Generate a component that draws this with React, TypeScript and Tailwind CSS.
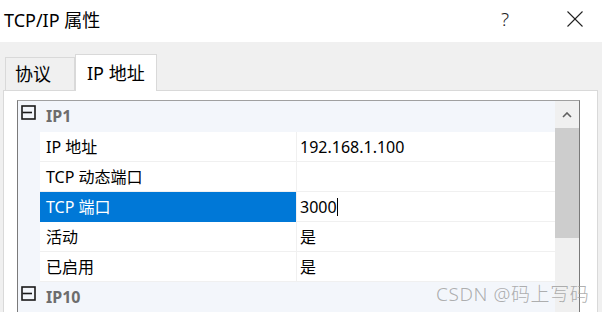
import React from "react";

const FONT = { fontFamily: '"Noto Sans", "Noto Sans CJK SC", sans-serif' };

function MinusBox() {
  return (
    <svg width="15" height="15" viewBox="0 0 15 15" className="block">
      <rect x="1" y="1" width="13" height="13" fill="none" stroke="#1a1a1a" strokeWidth="1.6" />
      <line x1="1.5" y1="7.5" x2="11" y2="7.5" stroke="#1a1a1a" strokeWidth="1.6" />
    </svg>
  );
}

function Category({ label }: { label: string }) {
  return (
    <div className="flex h-[31px] bg-[#f3f6fb] border-b border-[#f3f6fb]">
      <div className="w-[22px] shrink-0 pl-[3px] pt-[4px]">
        <MinusBox />
      </div>
      <div className="flex-1 pl-[6px] flex items-center text-[16px] font-bold text-[#6d6d6d]">{label}</div>
    </div>
  );
}

function Row({ name, value, selected, caret }: { name: string; value: string; selected?: boolean; caret?: boolean }) {
  return (
    <div className="flex h-[30px]">
      <div className="w-[22px] shrink-0 bg-[#f3f6fb]" />
      <div
        className={
          "w-[256px] shrink-0 pl-[6px] flex items-center text-[16px] border-b " +
          (selected ? "bg-[#0078d7] text-white border-[#0078d7]" : "bg-white text-black border-[#f0f0f0]")
        }
      >
        {name}
      </div>
      <div className="flex-1 bg-white border-l border-b border-[#f0f0f0] pl-[3px] flex items-center text-[16px] text-black">
        <span>{value}</span>
        {caret && <span className="inline-block w-px h-[18px] bg-black" />}
      </div>
    </div>
  );
}

export default function App() {
  return (
    <div className="w-[602px] h-[312px] overflow-hidden bg-[#f0f0f0] relative" style={FONT}>
      {/* title bar */}
      <div className="h-[42px] bg-white flex items-center">
        <div className="pl-[4px] text-[18px] text-black flex-1 -mt-[2px]">TCP/IP 属性</div>
        <div className="text-[19px] text-[#222] font-light w-[12px] mr-[54px] -mt-[4px]">?</div>
        <svg width="16" height="16" viewBox="0 0 16 16" className="mr-[19px] -mt-[4px]">
          <line x1="0.5" y1="0.5" x2="15.5" y2="15.5" stroke="#222" strokeWidth="1.1" />
          <line x1="15.5" y1="0.5" x2="0.5" y2="15.5" stroke="#222" strokeWidth="1.1" />
        </svg>
      </div>

      {/* tabs */}
      <div className="h-[48px] flex items-end pl-[5px]">
        <div className="h-[33px] w-[70px] border border-b-0 border-[#d9d9d9] bg-[#f0f0f0] flex items-center pl-[9px] text-[18px] text-black">
          协议
        </div>
        <div className="relative z-10 -mb-px h-[37px] w-[82px] border border-b-0 border-[#d9d9d9] bg-white flex items-center pl-[11px] text-[18px] text-black">
          IP 地址
        </div>
      </div>

      {/* panel */}
      <div className="ml-[3px] w-[595px] h-[240px] bg-white border border-[#d9d9d9] pl-[13px] pt-[9px]">
        <div className="w-[563px] h-[240px] border border-[#7a7a7a] border-t-[#a0a0a0] flex">
          <div className="flex-1 flex flex-col">
            <Category label="IP1" />
            <Row name="IP 地址" value="192.168.1.100" />
            <Row name="TCP 动态端口" value="" />
            <Row name="TCP 端口" value="3000" selected caret />
            <Row name="活动" value="是" />
            <Row name="已启用" value="是" />
            <Category label="IP10" />
          </div>
          <div className="w-[24px] shrink-0 bg-[#f0f0f0] flex flex-col">
            <div className="h-[27px] flex items-center justify-center">
              <svg width="10" height="6" viewBox="0 0 10 6">
                <polyline points="1,5 5,1 9,5" fill="none" stroke="#606060" strokeWidth="1.6" />
              </svg>
            </div>
            <div className="h-[110px] bg-[#cdcdcd]" />
          </div>
        </div>
      </div>

      {/* watermark */}
      <div className="absolute left-[436px] top-[280px] text-[19px] font-light text-[#9a9a9a]/80 tracking-[0.6px]">CSDN @码上写码</div>
    </div>
  );
}
